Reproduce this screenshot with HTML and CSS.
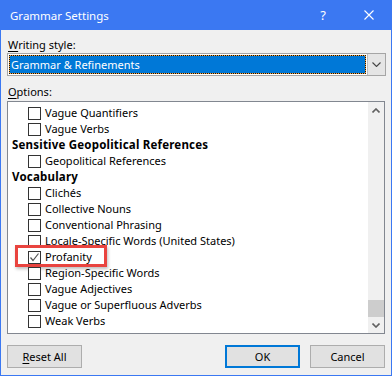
FILE: index.html
```html
<!DOCTYPE html>
<html>
<head>
<meta charset="utf-8">
<link rel="stylesheet" href="styles.css">
</head>
<body>
<div class="window">
  <div class="titlebar">
    <span class="title">Grammar Settings</span>
    <span class="help">?</span>
    <svg class="close" width="10" height="10" viewBox="0 0 10 10"><path d="M0.5 0.5 L9.5 9.5 M9.5 0.5 L0.5 9.5" stroke="#fff" stroke-width="1.1" fill="none"/></svg>
  </div>
  <div class="content">
    <div class="label"><u>W</u>riting style:</div>
    <div class="combo">
      <div class="combo-value"><span>Grammar &amp; Refinements</span></div>
      <div class="combo-btn">
        <svg width="9" height="5" viewBox="0 0 9 5"><path d="M0.5 0.5 L4.5 4.5 L8.5 0.5" stroke="#444" stroke-width="1.1" fill="none"/></svg>
      </div>
    </div>
    <div class="label label-opts"><u>O</u>ptions:</div>
    <div class="listbox">
      <div class="items">
        <div class="row item"><span class="cb"></span>Vague Quantifiers</div>
        <div class="row item"><span class="cb"></span>Vague Verbs</div>
        <div class="row head">Sensitive Geopolitical References</div>
        <div class="row item"><span class="cb"></span>Geopolitical References</div>
        <div class="row head">Vocabulary</div>
        <div class="row item"><span class="cb"></span>Clichés</div>
        <div class="row item"><span class="cb"></span>Collective Nouns</div>
        <div class="row item"><span class="cb"></span>Conventional Phrasing</div>
        <div class="row item"><span class="cb"></span>Locale-Specific Words (United States)</div>
        <div class="row item hl"><span class="cb checked"><svg width="11" height="11" viewBox="0 0 11 11"><path d="M1.5 5.5 L4 8.5 L9.5 1.5" stroke="#555" stroke-width="1.2" fill="none"/></svg></span>Profanity<span class="redbox"></span></div>
        <div class="row item"><span class="cb"></span>Region-Specific Words</div>
        <div class="row item"><span class="cb"></span>Vague Adjectives</div>
        <div class="row item"><span class="cb"></span>Vague or Superfluous Adverbs</div>
        <div class="row item"><span class="cb"></span>Weak Verbs</div>
      </div>
      <div class="scrollbar">
        <div class="sb-btn"><svg width="8" height="5" viewBox="0 0 8 5"><path d="M0.5 4.5 L4 1 L7.5 4.5" stroke="#606060" stroke-width="1.6" fill="none"/></svg></div>
        <div class="sb-track"><div class="sb-thumb"></div></div>
        <div class="sb-btn sb-down"><svg width="8" height="5" viewBox="0 0 8 5"><path d="M0.5 0.5 L4 4 L7.5 0.5" stroke="#606060" stroke-width="1.6" fill="none"/></svg></div>
      </div>
    </div>
    <div class="buttons">
      <div class="btn"><u>R</u>eset All</div>
      <div class="spacer"></div>
      <div class="btn btn-default">OK</div>
      <div class="btn">Cancel</div>
    </div>
  </div>
</div>
</body>
</html>
```
FILE: styles.css
```css
html, body {
  margin: 0;
  padding: 0;
}
body {
  font-family: "Noto Sans", sans-serif;
  font-size: 11px;
  color: #000;
}
.window {
  box-sizing: border-box;
  width: 392px;
  height: 376px;
  border: 1px solid #3b78f2;
  border-top: none;
  background: #f0f0f0;
  display: flex;
  flex-direction: column;
}
.titlebar {
  height: 30px;
  margin: 0 -1px;
  background: #3b78f2;
  color: #fff;
  display: flex;
  align-items: center;
  padding-left: 10px;
  font-size: 11.5px;
}
.title {
  flex: 1;
  padding-bottom: 0;
}
.help {
  font-size: 13px;
  margin-right: 38px;
}
.close {
  margin-right: 18px;
}
.content {
  padding: 0 6px;
  display: flex;
  flex-direction: column;
}
.label {
  height: 16px;
  line-height: 16px;
  margin-top: 7px;
  padding-left: 1px;
}
.label u { text-underline-offset: 2px; }
.label-opts {
  margin-top: 8px;
  height: 17px;
}
.combo {
  box-sizing: border-box;
  height: 23px;
  width: 379px;
  border: 1px solid #a5a5a5;
  background: #fff;
  display: flex;
  padding: 1px;
}
.combo-value {
  flex: 1;
  margin-right: 1px;
  box-sizing: border-box;
  border: 1px dotted #111;
  background: linear-gradient(#0078d7, #0078d7) padding-box, #f5a33c border-box;
  color: #fff;
  line-height: 17px;
  padding-left: 1px;
}
.combo-btn {
  width: 17px;
  margin: -1px -1px -1px 0;
  background: #e5e5e5;
  border-left: 1px solid #bdbdbd;
  display: flex;
  align-items: center;
  justify-content: center;
}
.listbox {
  box-sizing: border-box;
  width: 378px;
  height: 233px;
  border: 1px solid #828790;
  background: #fff;
  display: flex;
}
.items {
  flex: 1;
  padding-top: 3px;
}
.row {
  height: 16px;
  line-height: 16px;
  display: flex;
  align-items: center;
  white-space: nowrap;
  position: relative;
}
.head {
  font-weight: bold;
  font-size: 11.5px;
  letter-spacing: 0.2px;
  padding-left: 4px;
}
.item {
  padding-left: 20px;
}
.cb {
  box-sizing: border-box;
  width: 13px;
  height: 13px;
  border: 1px solid #333;
  background: #fff;
  margin-right: 4px;
  display: flex;
  align-items: center;
  justify-content: center;
}
.redbox {
  position: absolute;
  left: 7px;
  top: -4px;
  width: 92px;
  height: 22px;
  box-sizing: border-box;
  border: 3px solid #e9443f;
  box-shadow: 1px 2px 3px rgba(0,0,0,0.25);
}
.scrollbar {
  width: 16px;
  background: #f0f0f0;
  display: flex;
  flex-direction: column;
}
.sb-btn {
  height: 17px;
  display: flex;
  align-items: center;
  justify-content: center;
}
.sb-down { height: 16px; }
.sb-track {
  flex: 1;
  display: flex;
  flex-direction: column;
  justify-content: flex-end;
}
.sb-thumb {
  height: 17px;
  background: #cdcdcd;
}
.buttons {
  display: flex;
  margin-top: 11px;
  gap: 10px;
}
.spacer { flex: 1; }
.btn {
  box-sizing: border-box;
  width: 75px;
  height: 23px;
  border: 1px solid #adadad;
  background: #e1e1e1;
  display: flex;
  align-items: center;
  justify-content: center;
  padding-bottom: 1px;
}
.btn u { text-underline-offset: 2px; }
.btn-default {
  border: 2px solid #0078d7;
}
```
